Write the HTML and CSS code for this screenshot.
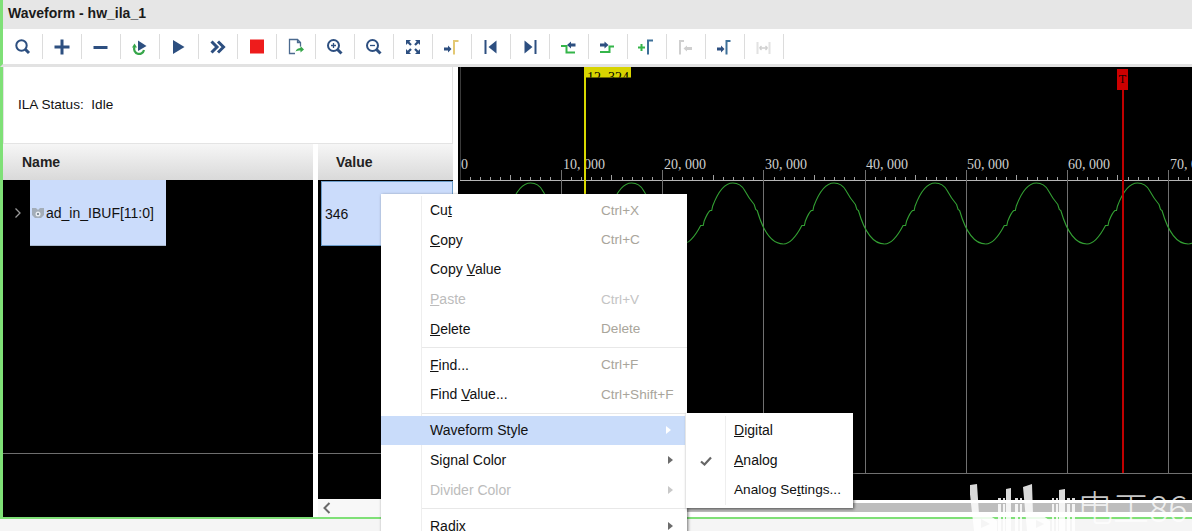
FILE: index.html
```html
<!DOCTYPE html>
<html lang="en">
<head>
<meta charset="utf-8">
<title>Waveform - hw_ila_1</title>
<link rel="stylesheet" href="styles.css">
</head>
<body>
<div class="app">
  <header class="title">Waveform - hw_ila_1</header>
  <nav class="toolbar">
    <div class="tool"><svg viewBox="0 0 20 20"><circle cx="8.5" cy="8.5" r="5.2" class="st-navy"/><path d="M12.5 12.5l3.5 3.5" class="st-navy w3"/></svg></div>
    <div class="tool"><svg viewBox="0 0 20 20"><path d="M2.5 10h15M10 2.5v15" class="st-navy w3"/></svg></div>
    <div class="tool"><svg viewBox="0 0 20 20"><path d="M2.5 10.5h14" class="st-navy w3"/></svg></div>
    <div class="tool"><svg viewBox="0 0 20 20"><path d="M8 3.500l8.500 5.500L8 14z" class="f-navy"/><path d="M4.500 10a5 5 0 1 0 9.500 3" class="st-green"/><path d="M2 10.500h5L4.500 6.500z" class="f-green"/></svg></div>
    <div class="tool"><svg viewBox="0 0 20 20"><path d="M4 3l11.5 7L4 17z" class="f-navy"/></svg></div>
    <div class="tool"><svg viewBox="0 0 20 20"><path d="M3.500 4.500l5.500 5.500-5.500 5.500M10 4.500l5.500 5.500-5.500 5.500" class="st-navy w3"/></svg></div>
    <div class="tool"><svg viewBox="0 0 20 20"><rect x="3" y="2.500" width="14" height="14" fill="#ee1c1c"/></svg></div>
    <div class="tool"><svg viewBox="0 0 20 20"><path d="M9 16.500H3.500v-14h8l3 3v4M11.500 2.500v3h3" class="st-slate"/><path d="M9.500 14.500c1-3 3-3.500 5-3.500V9l3.500 3.500-3.500 3V13.500c-2 0-3.500 0-5 1z" class="f-green"/></svg></div>
    <div class="tool"><svg viewBox="0 0 20 20"><circle cx="8.500" cy="8.500" r="5.500" class="st-navy"/><path d="M12.500 12.500l4 4" class="st-navy w3"/><path d="M6 8.500h5M8.500 6v5" class="st-navy thin"/></svg></div>
    <div class="tool"><svg viewBox="0 0 20 20"><circle cx="8.500" cy="8.500" r="5.500" class="st-navy"/><path d="M12.500 12.500l4 4" class="st-navy w3"/><path d="M6 8.500h5" class="st-navy thin"/></svg></div>
    <div class="tool"><svg viewBox="0 0 20 20"><path d="M3 3h5l-1.700 1.700 2.500 2.500-1.600 1.600-2.500-2.500L3 8zM17 3v5l-1.700-1.700-2.500 2.500-1.600-1.600 2.500-2.500L12 3zM3 17v-5l1.700 1.700 2.500-2.500 1.600 1.600-2.500 2.500L8 17zM17 17h-5l1.700-1.700-2.500-2.500 1.600-1.600 2.500 2.500L17 12z" class="f-navy"/></svg></div>
    <div class="tool"><svg viewBox="0 0 20 20"><path d="M2 10.500h4V8.500l3.500 3.500L6 15.500v-2H2z" class="f-navy"/><path d="M12 17.500V4h4.500" class="st-tan w2"/></svg></div>
    <div class="tool"><svg viewBox="0 0 20 20"><path d="M4.500 3v14" class="st-navy w2"/><path d="M15.500 3.500v13L7.500 10z" class="f-navy"/></svg></div>
    <div class="tool"><svg viewBox="0 0 20 20"><path d="M15.500 3v14" class="st-navy w2"/><path d="M4.500 3.500v13l8-6.500z" class="f-navy"/></svg></div>
    <div class="tool"><svg viewBox="0 0 20 20"><path d="M2 9H7.500V15.500H16" class="st-bright w2"/><path d="M8 8L12 4.500V6.500H16.500V9.500H12V11.500z" class="f-navy"/></svg></div>
    <div class="tool"><svg viewBox="0 0 20 20"><path d="M2 15H11.500V9.500H16" class="st-bright w2"/><path d="M2 6.500H6.500V4.500L10.500 8L6.500 11.500V9.500H2z" class="f-navy"/></svg></div>
    <div class="tool"><svg viewBox="0 0 20 20"><path d="M1 10.500h7M4.500 7v7" class="st-bright w2"/><path d="M11 17.500V3.500h5" class="st-navy2 w2"/></svg></div>
    <div class="tool"><svg viewBox="0 0 20 20"><path d="M4 17.500V4H8" class="st-gray w2"/><path d="M7.500 11.500L11 8.500V10H16V13H11V14.500z" class="f-gray"/></svg></div>
    <div class="tool"><svg viewBox="0 0 20 20"><path d="M2 10.500H6V8.500L9.500 12L6 15.500V13.500H2z" class="f-navy"/><path d="M11.500 17.500V4H15.500" class="st-navy2 w2"/></svg></div>
    <div class="tool"><svg viewBox="0 0 20 20"><path d="M3.500 5v12M15.500 5v12" class="st-pale w2"/><path d="M5.500 11h8M5.500 11l2-2M5.500 11l2 2M13.500 11l-2-2M13.500 11l-2 2" class="st-gray thin"/></svg></div>
  </nav>
  <main class="main">
    <section class="left">
      <div class="status">ILA Status:&nbsp; Idle</div>
      <div class="columns">
        <div class="col col-name">
          <div class="head head-name">Name</div>
          <div class="rows">
            <div class="row">
              <svg class="chev" viewBox="0 0 8 12"><path d="M1.500 1.500L6 6l-4.500 4.500"/></svg>
              <div class="sel-name">
                <svg class="bus" viewBox="0 0 14 14"><path d="M1 2h4l2 2 2-2h4v7l-3 3H4L1 9z" fill="#a3adb8"/><circle cx="7" cy="8" r="2.500" fill="#e8edf2"/><circle cx="7" cy="8" r="1" fill="#66727f"/></svg>
                <span>ad_in_IBUF[11:0]</span>
              </div>
            </div>
          </div>
          <div class="fill"></div>
        </div>
        <div class="col col-value">
          <div class="head head-value">Value</div>
          <div class="rows rows-value">
            <div class="sel-value">346</div>
          </div>
          <div class="fill short"></div>
          <div class="lscroll"><svg class="scroll-chev" viewBox="0 0 8 12"><path d="M6.500 1L1.500 6l5 5"/></svg></div>
        </div>
      </div>
    </section>
    <section class="right">
      <svg class="wave" viewBox="458 67 734 433">
        <defs>
          <path id="cycle" d="M0 244C6 244 13 236 18.500 225.500h2.500l1-4.500C24 216 26 212 28 210.500h1.500l1-4.500C35 194 42 183 50.600 183C56 183 60 186 62.500 190.500C66 197 69 201 72 204.500l1.500 5 1.500 1C78 221 86 244 101.200 244"/>
        </defs>
        <path class="dim" d="M460.500 67V180"/>
        <path class="axis" d="M460 180.500H1192"/>
        <path class="minor" d="M470.500 177v3M480.500 177v3M490.500 177v3M500.500 177v3M520.500 177v3M530.500 177v3M540.500 177v3M550.500 177v3M571.500 177v3M581.500 177v3M591.500 177v3M601.500 177v3M622.500 177v3M632.500 177v3M642.500 177v3M652.500 177v3M672.500 177v3M682.500 177v3M692.500 177v3M702.500 177v3M723.500 177v3M733.500 177v3M743.500 177v3M753.500 177v3M774.500 177v3M784.500 177v3M794.500 177v3M804.500 177v3M824.500 177v3M834.500 177v3M844.500 177v3M854.500 177v3M875.500 177v3M885.500 177v3M895.500 177v3M905.500 177v3M926.500 177v3M936.500 177v3M946.500 177v3M956.500 177v3M976.500 177v3M986.500 177v3M996.500 177v3M1006.500 177v3M1027.500 177v3M1037.500 177v3M1047.500 177v3M1057.500 177v3M1077.500 177v3M1087.500 177v3M1097.500 177v3M1107.500 177v3M1128.500 177v3M1138.500 177v3M1148.500 177v3M1158.500 177v3M1178.500 177v3M1188.500 177v3"/>
        <path class="minor" d="M510.500 175v5M611.500 175v5M713.500 175v5M814.500 175v5M915.500 175v5M1016.500 175v5M1117.500 175v5"/>
        <path class="grid" d="M561.500 170V473M662.500 170V473M763.500 170V473M865.500 170V473M966.500 170V473M1067.500 170V473M1168.500 170V473M458 473.500H1192"/>
        <g class="labels">
          <text x="461" y="169">0</text>
          <text x="563" y="169">10, 000</text>
          <text x="664" y="169">20, 000</text>
          <text x="765" y="169">30, 000</text>
          <text x="866" y="169">40, 000</text>
          <text x="967" y="169">50, 000</text>
          <text x="1068" y="169">60, 000</text>
          <text x="1170" y="169">70, 000</text>
        </g>
        <g class="sine">
          <use href="#cycle" x="480"/>
          <use href="#cycle" x="581"/>
          <use href="#cycle" x="682.200"/>
          <use href="#cycle" x="783.400"/>
          <use href="#cycle" x="884.600"/>
          <use href="#cycle" x="985.800"/>
          <use href="#cycle" x="1087"/>
          <use href="#cycle" x="1188.200"/>
        </g>
        <rect x="584" y="67" width="2" height="140" fill="#d8d800"/>
        <rect x="584" y="67" width="47" height="10.500" fill="#d8d400"/>
        <svg x="584" y="67" width="47" height="10.500" viewBox="0 0 47 10.500"><text class="flag-text" x="3" y="14.500">12, 324</text></svg>
        <rect x="1122" y="69" width="2" height="404" fill="#c00000"/>
        <rect x="1117" y="69" width="11" height="21" fill="#cc0000"/>
        <text class="t-text" x="1122.500" y="83">T</text>
      </svg>
      <div class="hscroll"><div class="thumb"></div></div>
    </section>
  </main>
  <footer class="foot"></footer>
</div>

<div class="menu">
  <div class="mi"><span>Cu<u>t</u></span><span class="key">Ctrl+X</span></div>
  <div class="mi"><span><u>C</u>opy</span><span class="key">Ctrl+C</span></div>
  <div class="mi"><span>Copy <u>V</u>alue</span></div>
  <div class="mi off"><span><u>P</u>aste</span><span class="key">Ctrl+V</span></div>
  <div class="mi"><span><u>D</u>elete</span><span class="key">Delete</span></div>
  <div class="sep"></div>
  <div class="mi"><span><u>F</u>ind...</span><span class="key">Ctrl+F</span></div>
  <div class="mi"><span>Find <u>V</u>alue...</span><span class="key">Ctrl+Shift+F</span></div>
  <div class="sep"></div>
  <div class="mi hot"><span>Waveform Style</span><i class="arrow white"></i></div>
  <div class="mi"><span>Signal Color</span><i class="arrow"></i></div>
  <div class="mi off"><span>Divider Color</span><i class="arrow pale"></i></div>
  <div class="sep"></div>
  <div class="mi"><span>Radix</span><i class="arrow"></i></div>
</div>

<div class="submenu">
  <div class="si"><span><u>D</u>igital</span></div>
  <div class="si"><svg class="check" viewBox="0 0 12 10"><path d="M1 5.500l3.500 3L11 1.500"/></svg><span><u>A</u>nalog</span></div>
  <div class="si si-long"><span>Analog Se<u>t</u>tings...</span></div>
</div>

<div class="watermark">
  <svg class="wm-logo" viewBox="0 0 110 47">
    <path fill-rule="evenodd" d="M-1 1L7 0L9 30C16 30 24 33 27 37V47H4zM11 35L20 40L11 44z"/>
    <path d="M28 14h3v3h-3zM33 14h2v3h-2zM28 20h3v27h-3zM33 20h2v27h-2zM36 5l5-1v43h-5z"/>
    <path d="M45 14h3v3h-3zM50 14h2v3h-2zM45 20h3v27h-3zM50 20h2v27h-2z"/>
    <path fill-rule="evenodd" d="M53 3L62 0L63 30C70 30 76 33 80 37V47H57zM66 36L74 40L66 44z"/>
    <path d="M82 14h2v3h-2zM86 14h2v3h-2zM82 20h2v27h-2zM86 20h2v27h-2zM89 6l6-1v42h-6z"/>
    <path d="M97 14h3v3h-3zM102 14h3v3h-3zM97 20h3v27h-3zM102 20h3v27h-3z"/>
  </svg>
  <span class="wm-text">电工86</span>
</div>
</body>
</html>
```

FILE: styles.css
```css
* { box-sizing: border-box; }
html, body { margin: 0; padding: 0; }
body {
  position: relative;
  width: 1192px;
  height: 531px;
  overflow: hidden;
  background: #f5f5f5;
  font-family: "Liberation Sans", Arial, sans-serif;
  font-size: 14px;
  color: #111;
}
.app { display: flex; flex-direction: column; height: 531px; }
.title {
  height: 29px;
  padding: 5px 0 0 5px;
  background: #e6e6e6;
  border-left: 3px solid #7fe077;
  font-weight: bold;
  font-size: 14px;
  line-height: 16px;
  color: #1a1a1a;
}
.toolbar {
  display: flex;
  height: 38px;
  padding: 5px 0 0 1px;
  background: #fff;
  border-left: 3px solid #7fe077;
  border-bottom: 3px solid #e2e2e2;
}
.tool {
  width: 39px;
  height: 25px;
  display: flex;
  align-items: center;
  justify-content: center;
  border-right: 1px solid #dcdcdc;
}
.tool svg { width: 20px; height: 20px; fill: none; }
.st-navy { stroke: #2d4f80; stroke-width: 2; fill: none; }
.st-slate { stroke: #4b6a8f; stroke-width: 1.300; fill: none; }
.st-green { stroke: #36a64a; stroke-width: 2.200; fill: none; }
.st-tan { stroke: #e3c873; fill: none; }
.st-bright { stroke: #35b54a; fill: none; }
.st-navy2 { stroke: #3d7099; fill: none; }
.st-gray { stroke: #cfcfcf; fill: none; }
.st-pale { stroke: #e2e2e2; fill: none; }
.w2 { stroke-width: 2; }
.w3 { stroke-width: 3; }
.thin { stroke-width: 1.300; }
.f-navy { fill: #2d4f80; }
.f-green { fill: #36a64a; }
.f-gray { fill: #cfcfcf; }

.main {
  display: flex;
  height: 450px;
  border-left: 3px solid #7fe077;
  background: #fff;
}
.left { width: 450px; display: flex; flex-direction: column; }
.status {
  height: 77px;
  padding: 30px 0 0 14px;
  line-height: 16px;
  background: #fff;
  border: 1px solid #e4e4e4;
  border-width: 0 1px 1px 1px;
  font-size: 13.600px;
}
.columns { display: flex; flex: 1; gap: 5px; min-height: 0; }
.col { display: flex; flex-direction: column; }
.col-name { width: 310px; }
.col-value { width: 135px; }
.head {
  height: 36px;
  line-height: 36px;
  font-weight: bold;
  font-size: 14px;
  color: #222;
  background: linear-gradient(#f6f6f6, #d9d9d9);
}
.head-name { padding-left: 19px; }
.head-value { padding-left: 18px; }
.rows { height: 274px; background: #000; border-bottom: 1px solid #6e6e6e; }
.fill { flex: 1; background: #000; }
.row { display: flex; height: 66px; align-items: center; }
.chev { width: 8px; height: 12px; margin: 0 8px 0 11px; fill: none; stroke: #9a9a9a; stroke-width: 1.300; }
.sel-name {
  width: 136px;
  height: 66px;
  display: flex;
  align-items: center;
  gap: 1px;
  padding-left: 1px;
  background: #cbdcfb;
  border-bottom: 1px solid #a9b9cf;
  color: #111;
}
.bus { width: 14px; height: 14px; }
.sel-value {
  width: 132px;
  height: 65px;
  margin: 1px 0 0 3px;
  padding-left: 3px;
  line-height: 64px;
  background: #cbdcfb;
  border: 1px solid #6c9cc9;
}
.fill.short { flex: 0 0 45px; }
.lscroll { flex: 1; background: #f8f8f8; display: flex; align-items: center; padding-left: 5px; }
.scroll-chev { width: 8px; height: 12px; fill: none; stroke: #6a6a6a; stroke-width: 2; }

.right { flex: 1; margin-left: 5px; display: flex; flex-direction: column; min-width: 0; }
.wave { display: block; width: 734px; height: 433px; background: #000; flex: none; }
.dim { stroke: #3a3a3a; fill: none; }
.axis { stroke: #b5b5b5; fill: none; }
.minor { stroke: #a0a0a0; fill: none; }
.grid { stroke: #707070; fill: none; }
.labels text { font-family: "Liberation Serif", serif; font-size: 14px; fill: #cfcfcf; }
.sine { fill: none; stroke: #33a033; stroke-width: 1.100; }
.flag-text { font-family: "Liberation Serif", serif; font-size: 14px; fill: #000; }
.t-text { font-family: "DejaVu Serif", serif; font-size: 11px; fill: #200; text-anchor: middle; }
.hscroll { flex: 1; background: #fff; padding-top: 3px; }
.thumb { height: 9px; background: #bdbdbd; }
.foot {
  height: 14px;
  background: #f5f5f5;
  border-top: 2px solid #7fe077;
}

.menu {
  position: absolute;
  left: 381px;
  top: 194px;
  width: 306px;
  height: 346px;
  padding-top: 1.500px;
  background: #fff;
  box-shadow: 1px 1px 3px rgba(0, 0, 0, .55);
  z-index: 2;
}
.menu::before {
  content: "";
  position: absolute;
  left: 40px;
  top: 2px;
  bottom: 0;
  width: 1px;
  background: #eeeeee;
}
.mi {
  position: relative;
  display: grid;
  grid-template-columns: 172px 1fr;
  height: 29.600px;
  padding-left: 49px;
  align-items: center;
  font-size: 14px;
  color: #111;
}
.mi.hot { background: #c9dcfa; margin-right: 2px; }
.mi.off { color: #bcbcbc; }
.key { margin-left: -1px; color: #a9a59b; white-space: nowrap; font-size: 13.600px; }
.mi.off .key { color: #c4c4c4; }
.sep { height: 6.500px; margin-left: 40px; padding-top: 3.500px; }
.sep::before { content: ""; display: block; height: 1px; background: #e8e8e8; }
.arrow {
  position: absolute;
  right: 14px;
  top: 50%;
  margin-top: -4px;
  border-left: 5px solid #6c6c6c;
  border-top: 4px solid transparent;
  border-bottom: 4px solid transparent;
}
.arrow.white { border-left-color: #fff; }
.arrow.pale { border-left-color: #c8c8c8; }
.submenu {
  position: absolute;
  left: 686px;
  top: 413px;
  width: 167px;
  height: 95px;
  padding-top: 3px;
  background: #fff;
  box-shadow: 1px 1px 3px rgba(0, 0, 0, .6);
  z-index: 3;
}
.submenu::before {
  content: "";
  position: absolute;
  left: 39px;
  top: 3px;
  bottom: 3px;
  width: 1px;
  background: #eeeeee;
}
.si { position: relative; height: 29.600px; line-height: 29.600px; padding-left: 48px; font-size: 14px; }
.si-long { font-size: 13.650px; }
.check {
  position: absolute;
  left: 14px;
  top: 10px;
  width: 12px;
  height: 10px;
  fill: none;
  stroke: #666;
  stroke-width: 2.200;
}
.watermark {
  position: absolute;
  right: 0;
  bottom: 0;
  width: 222px;
  height: 47px;
  display: flex;
  align-items: flex-start;
  overflow: hidden;
  z-index: 4;
  pointer-events: none;
}
.wm-logo { width: 110px; height: 47px; flex: none; overflow: visible; fill: rgba(255, 255, 255, .85); }
.wm-text {
  margin-left: -3px;
  font-family: "Noto Sans CJK SC", sans-serif;
  font-size: 36px;
  font-weight: 300;
  line-height: 44px;
  white-space: nowrap;
  color: rgba(255, 255, 255, .8);
}
```
